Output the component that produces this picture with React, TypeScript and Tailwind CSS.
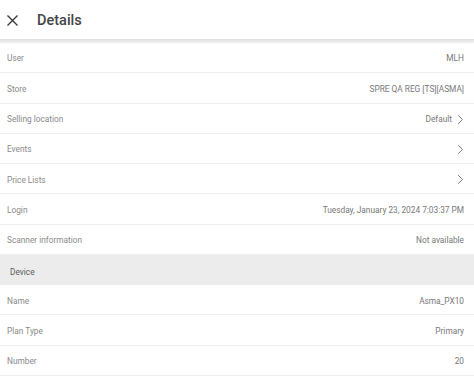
import React from "react";

const Chevron = () => (
  <svg width="7" height="11" viewBox="0 0 7 11" className="ml-[5px]">
    <path d="M1.2 1.2l4.2 4.3-4.2 4.3" fill="none" stroke="#7a7a7a" strokeWidth="1" />
  </svg>
);

type Row = { label: string; value?: string; chevron?: boolean };

const RowItem = ({ label, value, chevron }: Row) => (
  <div className="flex h-[30.3px] items-center justify-between border-b border-[#efefef] pl-[7px] pr-[10px] pt-[2px]">
    <span className="text-[#8a8a8a]">{label}</span>
    <span className="flex items-center text-[#777]">
      {value}
      {chevron && <Chevron />}
    </span>
  </div>
);

export default function App() {
  const top: Row[] = [
    { label: "User", value: "MLH" },
    { label: "Store", value: "SPRE QA REG [TS][ASMA]" },
    { label: "Selling location", value: "Default", chevron: true },
    { label: "Events", chevron: true },
    { label: "Price Lists", chevron: true },
    { label: "Login", value: "Tuesday, January 23, 2024 7:03:37 PM" },
    { label: "Scanner information", value: "Not available" },
  ];
  const dev: Row[] = [
    { label: "Name", value: "Asma_PX10" },
    { label: "Plan Type", value: "Primary" },
    { label: "Number", value: "20" },
  ];
  return (
    <div
      className="h-[376px] w-[474px] overflow-hidden bg-white text-[8.3px]"
      style={{ fontFamily: "Roboto, 'Liberation Sans', sans-serif" }}
    >
      <div className="flex h-[39px] items-center pt-[3px]">
        <svg width="13" height="13" viewBox="0 0 13 13" className="ml-[6px] mt-[-2px]">
          <path d="M1.5 1.5l10 10M11.5 1.5l-10 10" stroke="#3a3a3a" strokeWidth="1.4" />
        </svg>
        <span className="ml-[18px] text-[14.5px] font-medium text-[#454545]">Details</span>
      </div>
      <div className="h-[4px] bg-gradient-to-b from-[#e0e0e0] to-[#f2f2f2]" />
      {top.map((r) => (
        <RowItem key={r.label} {...r} />
      ))}
      <div className="flex h-[30px] items-center bg-[#ececec] pl-[10px] pt-[4px] text-[#5a5a5a]">Device</div>
      {dev.map((r) => (
        <RowItem key={r.label} {...r} />
      ))}
    </div>
  );
}
